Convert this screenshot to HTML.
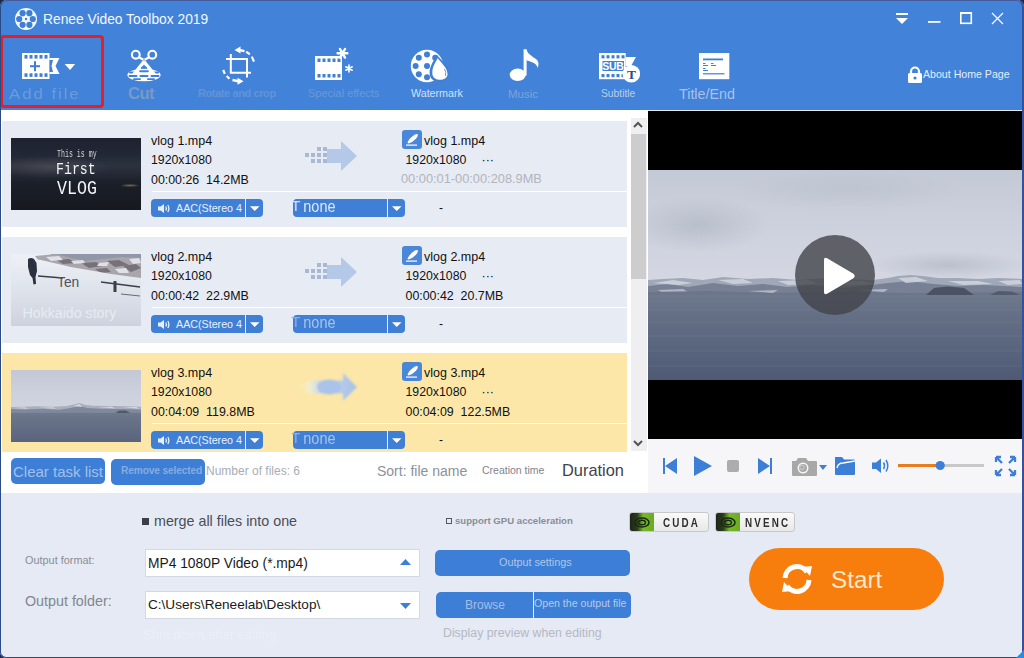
<!DOCTYPE html>
<html><head><meta charset="utf-8">
<style>
*{margin:0;padding:0;box-sizing:border-box}
html,body{width:1024px;height:658px;overflow:hidden;background:#1b2a4a}
body{font-family:"Liberation Sans",sans-serif;position:relative}
.a{position:absolute}
#win{left:0;top:0;width:1024px;height:658px;background:#e5eaf5;border-radius:7px 7px 6px 6px;overflow:hidden}
#bord{left:0;top:0;width:1024px;height:658px;border:1px solid #2a4b86;border-top-color:#465c9a;border-right:2px solid #34529a;border-radius:7px 7px 6px 6px}
#hdr{left:0;top:0;width:1024px;height:110px;background:#4283d9}
.lbl{position:absolute;white-space:nowrap;font-family:"Liberation Sans",sans-serif}
#list{left:1px;top:110px;width:647px;height:383px;background:#fff}
.row{position:absolute;left:1px;width:625px;height:106px;background:#e7ebf3;border-left:2px solid #e7ebf3}
.row.y{background:#fce7a8;border-left-color:#fce7a8}
.thumb{position:absolute;left:7px;top:17px;width:130px;height:72px;overflow:hidden}
.t1{position:absolute;white-space:nowrap;font-size:12px;color:#111}
.sep{position:absolute;left:148px;top:70px;width:475px;height:1px;background:#fff}
.aac{position:absolute;left:147px;top:78px;width:112px;height:17.6px;background:#3f7fd6;border-radius:4px}
.none{position:absolute;left:288.8px;top:78px;width:112.2px;height:17.6px;background:#3f7fd6;border-radius:4px}
.btn{position:absolute;background:#3d7fd6;border-radius:4px}
</style></head><body>
<div id="win" class="a"><div id="hdr" class="a"></div>
<div class="a" style="left:0;top:0;width:1024px;height:110px;">
  <!-- logo -->
  <svg class="a" style="left:14px;top:7px" width="24" height="24" viewBox="0 0 24 24">
    <circle cx="12" cy="12" r="11" fill="#f4f9ff"/>
    <g fill="#3f7fd6">
      <circle cx="8.6" cy="6.2" r="3.1"/><circle cx="15.4" cy="6.2" r="3.1"/>
      <circle cx="5.2" cy="12" r="3.1"/><circle cx="18.8" cy="12" r="3.1"/>
      <circle cx="8.6" cy="17.8" r="3.1"/><circle cx="15.4" cy="17.8" r="3.1"/>
      <circle cx="12" cy="12" r="1.2"/>
    </g>
  </svg>
  <div class="lbl" style="left:43px;top:12px;font-size:13.8px;color:#f2f7ff;line-height:16px">Renee Video Toolbox 2019</div>
  <!-- window controls -->
  <svg class="a" style="left:890px;top:6px" width="125" height="24" viewBox="0 0 125 24">
    <rect x="6" y="7" width="12" height="2" fill="#fff"/>
    <path d="M6 12 L18 12 L12 18 Z" fill="#fff"/>
    <rect x="38" y="15" width="12.5" height="1.8" fill="#fff"/>
    <rect x="70.8" y="6.8" width="10.5" height="10.5" fill="none" stroke="#fff" stroke-width="1.6"/>
    <rect x="70" y="6" width="12" height="2" fill="#fff"/>
    <path d="M102 7 L113 18 M113 7 L102 18" stroke="#fff" stroke-width="1.2"/>
  </svg>
  <!-- red box -->
  <div class="a" style="left:0;top:35px;width:104px;height:73px;border:3px solid #ea1c24;border-radius:4px"></div>
  <!-- Add file icon -->
  <svg class="a" style="left:20px;top:50px" width="60" height="32" viewBox="0 0 60 32">
    <rect x="2" y="3" width="27.5" height="26" fill="#fff"/>
    <g fill="#3f7fd6">
      <rect x="4.5" y="5" width="3" height="3.6"/><rect x="9.5" y="5" width="3" height="3.6"/><rect x="14.5" y="5" width="3" height="3.6"/><rect x="19.5" y="5" width="3" height="3.6"/><rect x="24.5" y="5" width="3" height="3.6"/>
      <rect x="4.5" y="23.3" width="3" height="3.6"/><rect x="9.5" y="23.3" width="3" height="3.6"/><rect x="14.5" y="23.3" width="3" height="3.6"/><rect x="19.5" y="23.3" width="3" height="3.6"/><rect x="24.5" y="23.3" width="3" height="3.6"/>
      <rect x="10" y="15.2" width="10" height="2"/><rect x="14" y="11.2" width="2" height="10"/>
    </g>
    <path d="M29.5 8 L39.5 8 L35.5 16 L39.5 24 L29.5 24 Z" fill="#fff"/>
    <path d="M29.5 10 L33 10 L31.5 16 L33 22 L29.5 22 Z" fill="#3f7fd6"/>
    <path d="M44.7 14 L55.2 14 L50 20 Z" fill="#fff"/>
  </svg>
  <div class="lbl" style="left:9px;top:86px;font-size:14px;color:#6d9bd9;line-height:16px;letter-spacing:1.5px;transform:scaleX(1.22);transform-origin:0 0">Add file</div>
  <!-- Cut icon -->
  <svg class="a" style="left:124px;top:46px" width="40" height="38" viewBox="0 0 40 38">
    <circle cx="11.8" cy="8.7" r="3.9" fill="none" stroke="#fff" stroke-width="2.1"/>
    <circle cx="28.3" cy="8.7" r="3.9" fill="none" stroke="#fff" stroke-width="2.1"/>
    <path d="M14.8 11.3 L20 14 L25.2 11.3" stroke="#fff" stroke-width="2.2" fill="none"/>
    <ellipse cx="20" cy="29" rx="16.6" ry="6.3" fill="#fff"/>
    <g fill="#3f7fd6">
      <rect x="5" y="25.6" width="7.5" height="2" rx="1"/><rect x="27.5" y="25.6" width="7.5" height="2" rx="1"/>
      <rect x="4.5" y="29" width="9" height="2" rx="1"/><rect x="15.5" y="29" width="9" height="2" rx="1"/><rect x="26.5" y="29" width="9" height="2" rx="1"/>
      <rect x="9" y="32.2" width="8" height="1.8" rx=".9"/><rect x="23" y="32.2" width="8" height="1.8" rx=".9"/>
    </g>
    <path d="M20 13 L8 28 L12.5 28.5 L20 18.5 L27.5 28.5 L32 28 Z" fill="#fff"/>
    <g fill="#3f7fd6"><rect x="17.2" y="20.5" width="5.6" height="1.8" rx=".9"/><rect x="15.2" y="24.3" width="9.6" height="2" rx="1"/></g>
    <circle cx="20" cy="14" r="1" fill="#d8403a" opacity=".55"/>
  </svg>
  <div class="lbl" style="left:128px;top:84px;font-size:16.5px;color:#789ac6;line-height:18px;font-weight:bold;letter-spacing:-0.5px">Cut</div>
  <!-- Rotate and crop -->
  <svg class="a" style="left:220px;top:44px" width="40" height="42" viewBox="0 0 40 42">
    <path d="M10.8 10 L10.8 28.8 L31 28.8 M6 15 L27 15 L27 33.5" fill="none" stroke="#fff" stroke-width="2"/>
    <g stroke="#fff" stroke-width="2.2" fill="none">
      <path d="M26.2 7.6 L29.8 10.4"/><path d="M31.8 12.6 L34 17.6"/>
      <path d="M3.2 25.8 L4.8 29.8"/><path d="M6.6 32 L9.5 34.8"/>
    </g>
    <path d="M14.5 6 L20.5 2.5 L20.5 9.5 Z" fill="#fff"/><path d="M19 6 L24.5 7.2" stroke="#fff" stroke-width="2.4"/>
    <path d="M23.5 37.2 L17.5 33.7 L17.5 40.7 Z" fill="#fff"/><path d="M12.5 36 L18.5 37.2" stroke="#fff" stroke-width="2.4"/>
  </svg>
  <div class="lbl" style="left:198px;top:87px;font-size:11px;color:#6393d6;line-height:13px;font-weight:bold;letter-spacing:-0.4px">Rotate and crop</div>
  <!-- Special effects -->
  <svg class="a" style="left:312px;top:46px" width="44" height="36" viewBox="0 0 44 36">
    <rect x="3" y="10" width="27" height="24" fill="#fff"/>
    <g fill="#3f7fd6">
      <rect x="5.5" y="12.5" width="3" height="3.5"/><rect x="10.5" y="12.5" width="3" height="3.5"/><rect x="15.5" y="12.5" width="3" height="3.5"/><rect x="20.5" y="12.5" width="3" height="3.5"/><rect x="25.5" y="12.5" width="3" height="3.5"/>
      <rect x="5.5" y="28" width="3" height="3.5"/><rect x="10.5" y="28" width="3" height="3.5"/><rect x="15.5" y="28" width="3" height="3.5"/><rect x="20.5" y="28" width="3" height="3.5"/><rect x="25.5" y="28" width="3" height="3.5"/>
    </g>
    <g stroke="#fff" stroke-width="2" stroke-linecap="round">
      <path d="M25.6 7.3 L35.4 7.3 M28 3 L33 11.6 M33 3 L28 11.6" stroke-width="2.4"/>
      <path d="M37 19 L37 26 M33.8 20.8 L40.2 24.2 M40.2 20.8 L33.8 24.2" stroke-width="1.6"/>
    </g>
  </svg>
  <div class="lbl" style="left:308px;top:87px;font-size:11px;color:#6a98d8;line-height:13px">Special effects</div>
  <!-- Watermark -->
  <svg class="a" style="left:408px;top:47px" width="46" height="38" viewBox="0 0 46 38">
    <circle cx="19" cy="19" r="16.2" fill="#fff"/>
    <g fill="#3f7fd6">
      <circle cx="19" cy="7.6" r="3"/><circle cx="10.8" cy="10.8" r="3"/><circle cx="27.2" cy="10.8" r="3"/>
      <circle cx="7.6" cy="19" r="3"/><circle cx="19" cy="19" r="3"/>
      <circle cx="10.8" cy="27.2" r="3"/><circle cx="19" cy="30.2" r="3"/>
    </g>
    <path d="M29 8 C 25 15, 20 21, 22 29 C 24 37, 41 37, 41.5 28 C 42 20, 34 14, 29 8 Z" fill="#3f7fd6"/>
    <path d="M29.8 11 C 27 16, 23.5 21, 24.5 28 C 26 34.5, 39 34.5, 39.5 27.5 C 40 21, 33 16, 29.8 11 Z" fill="#fff"/>
    <path d="M36.5 22 Q38.5 25 37.5 29" stroke="#3f7fd6" stroke-width="0.8" fill="none"/>
  </svg>
  <div class="lbl" style="left:411px;top:87px;font-size:10.7px;color:#d4e0f4;line-height:13px">Watermark</div>
  <!-- Music -->
  <svg class="a" style="left:505px;top:46px" width="40" height="38" viewBox="0 0 40 38">
    <ellipse cx="12.7" cy="28.8" rx="8" ry="6.2" fill="#fff"/>
    <rect x="18.6" y="3.5" width="3" height="26" fill="#fff"/>
    <path d="M18.6 3.5 L21.6 3.5 C 22.5 8, 27 10, 31 13 C 34 15.5, 34 19, 32.5 22 C 32 18, 28 16, 21.6 14.5 Z" fill="#fff"/>
  </svg>
  <div class="lbl" style="left:508px;top:87px;font-size:11.5px;color:#7ea2d9;line-height:14px">Music</div>
  <!-- Subtitle -->
  <svg class="a" style="left:596px;top:48px" width="44" height="38" viewBox="0 0 44 38">
    <rect x="3" y="5" width="26.7" height="26.2" fill="#fff"/>
    <g fill="#3f7fd6">
      <rect x="5.5" y="7.2" width="3" height="3.2"/><rect x="10.5" y="7.2" width="3" height="3.2"/><rect x="15.5" y="7.2" width="3" height="3.2"/><rect x="20.5" y="7.2" width="3" height="3.2"/><rect x="25.5" y="7.2" width="3" height="3.2"/>
      <rect x="5.5" y="26" width="3" height="3.2"/><rect x="10.5" y="26" width="3" height="3.2"/><rect x="15.5" y="26" width="3" height="3.2"/><rect x="20.5" y="26" width="3" height="3.2"/><rect x="25.5" y="26" width="3" height="3.2"/>
      <rect x="6.5" y="13" width="21.5" height="10"/>
    </g>
    <text x="17" y="22" font-family="Liberation Sans" font-size="10.5" font-weight="bold" fill="#fff" text-anchor="middle" letter-spacing="-0.3">SUB</text>
    <path d="M29.7 9 L40 9 L35 18 L29.7 18 Z" fill="#fff"/>
    <circle cx="35.3" cy="25.8" r="8.8" fill="#fff"/>
    <circle cx="35.5" cy="25.6" r="7" fill="#fff" stroke="#3f7fd6" stroke-width="0"/>
    <text x="35.5" y="30.5" font-family="Liberation Serif" font-size="13.5" font-weight="bold" fill="#2a4a8c" text-anchor="middle">T</text>
  </svg>
  <div class="lbl" style="left:601px;top:87px;font-size:10.3px;color:#bccdea;line-height:13px">Subtitle</div>
  <!-- Title/End -->
  <svg class="a" style="left:698px;top:52px" width="32" height="28" viewBox="0 0 32 28">
    <rect x="1" y="1" width="30.3" height="26.2" fill="#fff"/>
    <g fill="#3f7fd6">
      <rect x="5" y="6.5" width="20" height="1.8"/>
      <rect x="5" y="11" width="2.5" height="1"/><rect x="13" y="11" width="2.5" height="1"/>
      <rect x="5" y="13" width="5" height="1"/><rect x="13" y="13" width="5" height="1"/>
      <rect x="5" y="16" width="2.5" height="1"/><rect x="5" y="18" width="5" height="1"/>
      <rect x="5" y="21.2" width="21.5" height="1.2"/>
    </g>
  </svg>
  <div class="lbl" style="left:679px;top:86px;font-size:14.3px;color:#a9c1e9;line-height:17px">Title/End</div>
  <!-- About -->
  <svg class="a" style="left:907px;top:66px" width="16" height="18" viewBox="0 0 16 18">
    <path d="M4 8 L4 5.5 A4 4 0 0 1 12 5.5 L12 8" fill="none" stroke="#fff" stroke-width="2.2"/>
    <rect x="1" y="7" width="14" height="10" rx="1.5" fill="#fff"/>
    <circle cx="8" cy="12" r="1.6" fill="#3f7fd6"/>
  </svg>
  <div class="lbl" style="left:923px;top:68px;font-size:10.6px;color:#e4edf9;line-height:12px">About Home Page</div>
</div>

<div id="list" class="a"><div class="a" style="left:0;top:0;width:647px;height:342px;overflow:hidden"><div class="row" style="top:11px"><div class="thumb" style="background:linear-gradient(180deg,#1d2130 0%,#232837 25%,#2d323f 38%,#262b37 48%,#1b1f29 62%,#16191f 100%)">
   <div class="a" style="left:-20px;top:18px;width:120px;height:22px;border-radius:50%;background:radial-gradient(ellipse at center,rgba(90,88,95,.55) 0%,rgba(60,62,72,0) 70%)"></div>
   <div class="a" style="left:110px;top:46px;width:18px;height:3px;border-radius:2px;background:radial-gradient(ellipse at center,rgba(190,150,110,.6) 0%,rgba(120,100,80,0) 80%)"></div>
   <div class="lbl" style="left:46px;top:10px;font-family:'Liberation Mono',monospace;font-size:11px;color:#d0d4dc;line-height:12px;transform:scaleX(0.6);transform-origin:0 0">This is my</div>
   <div class="lbl" style="left:44.5px;top:23px;font-family:'Liberation Mono',monospace;font-size:17px;color:#f2f4f8;line-height:18px;transform:scaleX(0.78);transform-origin:0 0">First</div>
   <div class="lbl" style="left:45.5px;top:40px;font-family:'Liberation Mono',monospace;font-size:20px;color:#f2f4f8;line-height:21px;transform:scaleX(0.83);transform-origin:0 0">VLOG</div>
 </div><div class="t1" style="left:147px;top:12px;line-height:16px;font-size:12.5px">vlog 1.mp4</div><div class="t1" style="left:147px;top:31px;line-height:16px;font-size:12.3px">1920x1080</div><div class="t1" style="left:147px;top:51px;line-height:16px;font-size:12.4px">00:00:26&nbsp; 14.2MB</div><svg class="a" style="left:293px;top:18px" width="62" height="34" viewBox="0 0 62 34">
  <path d="M33 10 L47 10 L47 2 L63 17 L47 32 L47 24 L33 24 Z" fill="#b4c9e8" transform="translate(-3,0)"/>
  <g fill="#a9b8d3"><rect x="8" y="14" width="4" height="4"/><rect x="14" y="14" width="4" height="4"/><rect x="20" y="8" width="4" height="4"/><rect x="26" y="8" width="4" height="4"/><rect x="20" y="14" width="4" height="4"/><rect x="26" y="14" width="4" height="4"/><rect x="14" y="20" width="4" height="4"/><rect x="20" y="20" width="4" height="4"/><rect x="26" y="20" width="4" height="4"/></g>
</svg><svg class="a" style="left:398px;top:9px" width="20" height="19" viewBox="0 0 20 19">
  <rect x="0" y="0" width="20" height="19" rx="3" fill="#4a87d9"/>
  <path d="M5.5 12.8 Q7 8.5 12.5 4.8 Q15 3.5 15.8 4.6 Q16.3 6 14 8.8 Q10.5 12.5 6.5 13.6 Z" fill="#fff"/>
  <rect x="4" y="14.5" width="11" height="1.2" fill="#fff"/>
</svg><div class="t1" style="left:420px;top:12px;line-height:16px;font-size:12.5px">vlog 1.mp4</div><div class="t1" style="left:401.5px;top:31px;line-height:16px;font-size:12.3px">1920x1080</div><div class="t1" style="left:477.5px;top:30.5px;line-height:16px;font-size:12.5px">···</div><div class="t1" style="left:397px;top:50px;line-height:16px;font-size:12.8px;color:#b1b5bd">00:00:01-00:00:208.9MB</div><div class="sep"></div><div class="aac"><svg class="a" style="left:7px;top:5px" width="13" height="9" viewBox="0 0 13 9"><path d="M0 2.6 L2.6 2.6 L6 0 L6 9 L2.6 6.4 L0 6.4 Z" fill="#e8f0fb"/><path d="M7.8 2.5 Q9 4.5 7.8 6.5 M9.8 1 Q12 4.5 9.8 8" stroke="#e8f0fb" stroke-width="1.3" fill="none"/></svg>
    <div class="lbl" style="left:25px;top:3px;font-size:10.7px;color:#eaf1fb;line-height:12px">AAC(Stereo 4</div>
    <div class="a" style="left:93.5px;top:0;width:1px;height:18px;background:#e8effa"></div>
    <svg class="a" style="left:98.5px;top:6.5px" width="10" height="6" viewBox="0 0 10 6"><path d="M0 0.2 L9.5 0.2 L4.75 5 Z" fill="#fff"/></svg></div><div class="none"><div class="lbl" style="left:-1.5px;top:-1px;font-size:14.5px;color:#dae4f5;line-height:17px">T</div><div class="lbl" style="left:10.5px;top:0px;font-size:14.5px;color:#dde7f6;line-height:17px;transform:scaleY(1.08)">none</div>
    <div class="a" style="left:93.8px;top:0;width:1px;height:18px;background:#e8effa"></div>
    <svg class="a" style="left:99px;top:6.5px" width="10" height="6" viewBox="0 0 10 6"><path d="M0 0.2 L9.5 0.2 L4.75 5 Z" fill="#fff"/></svg></div><div class="t1" style="left:435px;top:79px;line-height:16px">-</div></div>
<div class="row" style="top:127px"><div class="thumb"><svg width="130" height="72" viewBox="0 0 130 72">
   <defs><linearGradient id="sn" x1="0" y1="0" x2="0" y2="1"><stop offset="0" stop-color="#edf0f5"/><stop offset=".4" stop-color="#e1e5ed"/><stop offset="1" stop-color="#cdd2de"/></linearGradient></defs>
   <rect width="130" height="72" fill="url(#sn)"/>
   <path d="M40 0 L130 0 L130 10 L40 10 Z" fill="#9097a7"/>
   <path d="M24 2 L45 0 L60 4 L75 7 L92 5 L110 3 L130 4 L130 26 L100 21 L60 14 L28 7 Z" fill="#a9a6ab"/>
   <path d="M45 6 L58 5 L66 9 L52 10 Z M70 9 L85 8 L92 12 L78 14 Z M96 7 L108 6 L118 11 L104 13 Z M112 12 L125 10 L130 14 L120 18 Z M84 15 L96 14 L100 18 L90 19 Z" fill="#77727a"/>
   <path d="M35 3 L48 2 L52 6 L40 7 Z M60 7 L72 6 L74 9 L63 10 Z M88 9 L98 8 L96 12 L86 12 Z M118 5 L128 4 L130 9 L122 10 Z M104 15 L115 14 L118 19 L108 19 Z" fill="#dfe1e7"/>
   <path d="M0 2 L30 6 L60 13 L100 20 L130 24 L130 72 L0 72 Z" fill="url(#sn)"/>
   <path d="M17 5 Q20 3 23 5 L25.5 9 L26 17 L24.5 23 L25 30 L22.5 30.5 L21.5 24 L19 21 L17 13 Z" fill="#2b3140"/>
   <path d="M27 22 L52 24" stroke="#3a3f4a" stroke-width="1.6"/>
   <path d="M90 28 L129 33" stroke="#3a3f4a" stroke-width="1.6"/>
   <rect x="102.5" y="27" width="3" height="11" fill="#3a3f4a"/>
   <path d="M110 40 L129 42" stroke="#4a4f5a" stroke-width="1.2" opacity=".8"/>
   <text x="46" y="33" font-family="Liberation Sans" font-size="13.8" fill="#4d525b">Ten</text>
   <text x="11.5" y="63.7" font-family="Liberation Sans" font-size="14.2" fill="#e8ebf3">Hokkaido story</text>
 </svg></div><div class="t1" style="left:147px;top:12px;line-height:16px;font-size:12.5px">vlog 2.mp4</div><div class="t1" style="left:147px;top:31px;line-height:16px;font-size:12.3px">1920x1080</div><div class="t1" style="left:147px;top:51px;line-height:16px;font-size:12.4px">00:00:42&nbsp; 22.9MB</div><svg class="a" style="left:293px;top:18px" width="62" height="34" viewBox="0 0 62 34">
  <path d="M33 10 L47 10 L47 2 L63 17 L47 32 L47 24 L33 24 Z" fill="#b4c9e8" transform="translate(-3,0)"/>
  <g fill="#a9b8d3"><rect x="8" y="14" width="4" height="4"/><rect x="14" y="14" width="4" height="4"/><rect x="20" y="8" width="4" height="4"/><rect x="26" y="8" width="4" height="4"/><rect x="20" y="14" width="4" height="4"/><rect x="26" y="14" width="4" height="4"/><rect x="14" y="20" width="4" height="4"/><rect x="20" y="20" width="4" height="4"/><rect x="26" y="20" width="4" height="4"/></g>
</svg><svg class="a" style="left:398px;top:9px" width="20" height="19" viewBox="0 0 20 19">
  <rect x="0" y="0" width="20" height="19" rx="3" fill="#4a87d9"/>
  <path d="M5.5 12.8 Q7 8.5 12.5 4.8 Q15 3.5 15.8 4.6 Q16.3 6 14 8.8 Q10.5 12.5 6.5 13.6 Z" fill="#fff"/>
  <rect x="4" y="14.5" width="11" height="1.2" fill="#fff"/>
</svg><div class="t1" style="left:420px;top:12px;line-height:16px;font-size:12.5px">vlog 2.mp4</div><div class="t1" style="left:401.5px;top:31px;line-height:16px;font-size:12.3px">1920x1080</div><div class="t1" style="left:477.5px;top:30.5px;line-height:16px;font-size:12.5px">···</div><div class="t1" style="left:401.5px;top:51px;line-height:16px;font-size:12.4px">00:00:42&nbsp; 20.7MB</div><div class="sep"></div><div class="aac"><svg class="a" style="left:7px;top:5px" width="13" height="9" viewBox="0 0 13 9"><path d="M0 2.6 L2.6 2.6 L6 0 L6 9 L2.6 6.4 L0 6.4 Z" fill="#e8f0fb"/><path d="M7.8 2.5 Q9 4.5 7.8 6.5 M9.8 1 Q12 4.5 9.8 8" stroke="#e8f0fb" stroke-width="1.3" fill="none"/></svg>
    <div class="lbl" style="left:25px;top:3px;font-size:10.7px;color:#eaf1fb;line-height:12px">AAC(Stereo 4</div>
    <div class="a" style="left:93.5px;top:0;width:1px;height:18px;background:#e8effa"></div>
    <svg class="a" style="left:98.5px;top:6.5px" width="10" height="6" viewBox="0 0 10 6"><path d="M0 0.2 L9.5 0.2 L4.75 5 Z" fill="#fff"/></svg></div><div class="none"><div class="lbl" style="left:-1.5px;top:-1px;font-size:14.5px;color:#8db0e2;line-height:17px">T</div><div class="lbl" style="left:10.5px;top:0px;font-size:14.5px;color:#a9c2e8;line-height:17px;transform:scaleY(1.08)">none</div>
    <div class="a" style="left:93.8px;top:0;width:1px;height:18px;background:#e8effa"></div>
    <svg class="a" style="left:99px;top:6.5px" width="10" height="6" viewBox="0 0 10 6"><path d="M0 0.2 L9.5 0.2 L4.75 5 Z" fill="#fff"/></svg></div><div class="t1" style="left:435px;top:79px;line-height:16px">-</div></div>
<div class="row y" style="top:243px"><div class="thumb"><svg width="130" height="72" viewBox="0 0 374 210" preserveAspectRatio="none">
    <defs>
      <linearGradient id="tsky" x1="0" y1="0" x2="0" y2="1"><stop offset="0" stop-color="#c3c8d4"/><stop offset=".5" stop-color="#ccd0dc"/><stop offset="1" stop-color="#d3d6e0"/></linearGradient>
      <linearGradient id="twat" x1="0" y1="0" x2="0" y2="1"><stop offset="0" stop-color="#6f798d"/><stop offset=".3" stop-color="#667086"/><stop offset="1" stop-color="#5a647e"/></linearGradient>
    </defs>
    <rect width="374" height="126" fill="url(#tsky)"/>
    <path d="M0 126 L0 108 L35 107 L75 106 L120 107 L160 105 L185 100 L197 96 L212 101 L235 104 L290 105 L330 106 L374 107 L374 126 Z" fill="#a9afbd"/>
    <path d="M0 126 L0 114 L40 115 L90 113 L140 116 L175 110 L197 104 L220 111 L260 113 L310 114 L374 115 L374 126 Z" fill="#7f889c"/>
    <path d="M5 111 L40 109 L50 113 Z M80 110 L120 109 L130 113 Z M180 106 L197 99 L205 108 Z M250 108 L290 107 L300 112 Z M320 109 L360 108 L370 113 Z" fill="#dadde5" opacity=".85"/>
    <path d="M300 126 L310 119 L330 118 L345 126 Z" fill="#4f586a"/>
    <rect y="125" width="374" height="85" fill="url(#twat)"/>
 </svg></div><div class="t1" style="left:147px;top:12px;line-height:16px;font-size:12.5px">vlog 3.mp4</div><div class="t1" style="left:147px;top:31px;line-height:16px;font-size:12.3px">1920x1080</div><div class="t1" style="left:147px;top:51px;line-height:16px;font-size:12.4px">00:04:09&nbsp; 119.8MB</div><svg class="a" style="left:289px;top:15px" width="66" height="38" viewBox="0 0 66 38">
  <defs><linearGradient id="ag" x1="0" x2="1"><stop offset="0" stop-color="#fce7a8" stop-opacity="0"/><stop offset=".2" stop-color="#f3eed0"/><stop offset=".4" stop-color="#c7d6ec"/><stop offset="1" stop-color="#a6c1e8"/></linearGradient>
  <filter id="bl" x="-20%" y="-20%" width="140%" height="140%"><feGaussianBlur stdDeviation="1.2"/></filter></defs>
  <g filter="url(#bl)">
  <path d="M4 19 Q10 13 22 12.5 L50 12.5 L50 5 L64 19 L50 33 L50 25.5 L22 25.5 Q10 25 4 19 Z" fill="url(#ag)"/>
  <ellipse cx="36" cy="19" rx="12" ry="7.5" fill="#a9c3e9"/>
  </g>
</svg><svg class="a" style="left:398px;top:9px" width="20" height="19" viewBox="0 0 20 19">
  <rect x="0" y="0" width="20" height="19" rx="3" fill="#4a87d9"/>
  <path d="M5.5 12.8 Q7 8.5 12.5 4.8 Q15 3.5 15.8 4.6 Q16.3 6 14 8.8 Q10.5 12.5 6.5 13.6 Z" fill="#fff"/>
  <rect x="4" y="14.5" width="11" height="1.2" fill="#fff"/>
</svg><div class="t1" style="left:420px;top:12px;line-height:16px;font-size:12.5px">vlog 3.mp4</div><div class="t1" style="left:401.5px;top:31px;line-height:16px;font-size:12.3px">1920x1080</div><div class="t1" style="left:477.5px;top:30.5px;line-height:16px;font-size:12.5px">···</div><div class="t1" style="left:401.5px;top:51px;line-height:16px;font-size:12.4px">00:04:09&nbsp; 122.5MB</div><div class="sep"></div><div class="aac"><svg class="a" style="left:7px;top:5px" width="13" height="9" viewBox="0 0 13 9"><path d="M0 2.6 L2.6 2.6 L6 0 L6 9 L2.6 6.4 L0 6.4 Z" fill="#e8f0fb"/><path d="M7.8 2.5 Q9 4.5 7.8 6.5 M9.8 1 Q12 4.5 9.8 8" stroke="#e8f0fb" stroke-width="1.3" fill="none"/></svg>
    <div class="lbl" style="left:25px;top:3px;font-size:10.7px;color:#eaf1fb;line-height:12px">AAC(Stereo 4</div>
    <div class="a" style="left:93.5px;top:0;width:1px;height:18px;background:#e8effa"></div>
    <svg class="a" style="left:98.5px;top:6.5px" width="10" height="6" viewBox="0 0 10 6"><path d="M0 0.2 L9.5 0.2 L4.75 5 Z" fill="#fff"/></svg></div><div class="none"><div class="lbl" style="left:-1.5px;top:-1px;font-size:14.5px;color:#8db0e2;line-height:17px">T</div><div class="lbl" style="left:10.5px;top:0px;font-size:14.5px;color:#a9c2e8;line-height:17px;transform:scaleY(1.08)">none</div>
    <div class="a" style="left:93.8px;top:0;width:1px;height:18px;background:#e8effa"></div>
    <svg class="a" style="left:99px;top:6.5px" width="10" height="6" viewBox="0 0 10 6"><path d="M0 0.2 L9.5 0.2 L4.75 5 Z" fill="#fff"/></svg></div><div class="t1" style="left:435px;top:79px;line-height:16px">-</div></div></div></div>
<!-- scrollbar -->
<div class="a" style="left:631px;top:118px;width:16px;height:333px;background:#efeff1"></div>
<div class="a" style="left:631px;top:134px;width:15px;height:145px;background:#cdcdcd"></div>
<svg class="a" style="left:633px;top:121px" width="10" height="8" viewBox="0 0 10 8"><path d="M1 6 L5 2 L9 6" stroke="#555" stroke-width="2" fill="none"/></svg>
<svg class="a" style="left:633px;top:439px" width="10" height="8" viewBox="0 0 10 8"><path d="M1 2 L5 6 L9 2" stroke="#555" stroke-width="2" fill="none"/></svg>
<!-- list bottom bar -->
<div class="btn" style="left:11px;top:458px;width:94px;height:26px;border-radius:5px"><div class="lbl" style="left:2px;top:5px;font-size:15px;color:#a3bfe9;line-height:17px">Clear task list</div></div>
<div class="btn" style="left:111px;top:459px;width:94px;height:26px;border-radius:5px"><div class="lbl" style="left:10px;top:6px;font-size:10.2px;font-weight:bold;color:#85abe0;line-height:12px;letter-spacing:-0.15px">Remove selected</div></div>
<div class="lbl" style="left:206px;top:464px;font-size:12px;color:#a9adb5;line-height:14px">Number of files: 6</div>
<div class="lbl" style="left:377px;top:463px;font-size:14px;color:#8d9199;line-height:16px">Sort: file name</div>
<div class="lbl" style="left:482px;top:464px;font-size:10.5px;color:#80848c;line-height:12px">Creation time</div>
<div class="lbl" style="left:562px;top:461px;font-size:16.4px;color:#3f4348;line-height:19px">Duration</div>
<!-- preview -->
<div class="a" style="left:648px;top:111px;width:374px;height:328px;background:#000;overflow:hidden">
  <svg class="a" style="left:0;top:59px" width="374" height="210" viewBox="0 0 374 210">
    <defs>
      <linearGradient id="vsky" x1="0" y1="0" x2="0" y2="1"><stop offset="0" stop-color="#c4c9d6"/><stop offset=".5" stop-color="#cdd1dd"/><stop offset="1" stop-color="#d4d7e2"/></linearGradient>
      <linearGradient id="vwat" x1="0" y1="0" x2="0" y2="1"><stop offset="0" stop-color="#6f798d"/><stop offset=".25" stop-color="#646f85"/><stop offset=".6" stop-color="#5a667e"/><stop offset="1" stop-color="#4e5a74"/></linearGradient>
      <linearGradient id="vmt" x1="0" y1="0" x2="0" y2="1"><stop offset="0" stop-color="#b9bfcc"/><stop offset=".5" stop-color="#8b94a8"/><stop offset="1" stop-color="#6a7389"/></linearGradient>
      <radialGradient id="cl1" cx=".5" cy=".5" r=".5"><stop offset="0" stop-color="#a9afbd" stop-opacity=".55"/><stop offset="1" stop-color="#a9afbd" stop-opacity="0"/></radialGradient>
    </defs>
    <rect width="374" height="110" fill="url(#vsky)"/>
    <ellipse cx="50" cy="55" rx="70" ry="28" fill="url(#cl1)"/>
    <ellipse cx="300" cy="95" rx="80" ry="14" fill="url(#cl1)"/>
    <ellipse cx="200" cy="20" rx="120" ry="20" fill="url(#cl1)" opacity=".5"/>
    <path d="M0 126 L0 110 L15 109 L35 108 L55 110 L75 107 L100 109 L125 108 L150 110 L175 108 L200 109 L225 110 L240 108 L250 106 L262 105 L275 106 L290 108 L310 108 L330 109 L350 108 L374 109 L374 126 Z" fill="#a0a7b6"/>
    <path d="M0 126 L0 116 L20 114 L40 117 L65 113 L90 116 L115 114 L140 117 L165 115 L190 118 L215 116 L240 113 L262 111 L285 114 L310 116 L335 115 L374 117 L374 126 Z" fill="#778095"/>
    <path d="M5 113 L25 110 L45 113 L30 115 Z M70 110 L95 109 L105 113 L85 114 Z M130 111 L160 110 L170 114 L140 115 Z M190 112 L215 111 L225 114 L200 115 Z M250 108 L268 107 L280 111 L258 113 Z M300 111 L330 111 L345 114 L315 115 Z M350 111 L372 110 L374 114 L360 115 Z" fill="#d5d8e1" opacity=".8"/>
    <path d="M10 120 L35 119 L40 122 L15 123 Z M100 121 L130 120 L125 123 Z M210 120 L240 119 L236 122 Z" fill="#c9cdd7" opacity=".7"/>
    <path d="M0 126 L0 122 L60 121 L120 123 L200 122 L260 123 L374 122 L374 126 Z" fill="#6c758a"/>
    <path d="M278 125 L286 118 L300 116.5 L316 118 L326 125 Z" fill="#4a5264"/>
    <path d="M342 125 L350 121 L364 121.5 L372 125 Z" fill="#535c6d"/>
    <rect y="125" width="374" height="85" fill="url(#vwat)"/>
    <g stroke="#7d879b" stroke-width=".7" opacity=".35">
      <path d="M0 140 H374 M0 152 H374 M0 166 H374 M0 181 H374 M0 196 H374"/>
    </g>
  </svg>
  <div class="a" style="left:147px;top:124px;width:80px;height:80px;border-radius:50%;background:rgba(66,68,74,.8)"></div>
  <svg class="a" style="left:172px;top:144px" width="38" height="42" viewBox="0 0 38 42"><path d="M4 5 Q4 1.5 7.5 3.5 L33 18.5 Q36.5 21 33 23.5 L7.5 38.5 Q4 40.5 4 37 Z" fill="#fff"/></svg>
</div>
<!-- controls -->
<div class="a" style="left:648px;top:439px;width:374px;height:54px;background:#f6f6f8"></div>
<svg class="a" style="left:660px;top:455px" width="360" height="24" viewBox="0 0 360 24">
  <rect x="3" y="3" width="2" height="16" fill="#3d7fd6"/><path d="M5 11 L17 3 L17 19 Z" fill="#3d7fd6"/>
  <path d="M34 1 L52 11 L34 21 Z" fill="#3d7fd6"/>
  <rect x="67" y="5" width="12" height="12" rx="2" fill="#acacac"/>
  <path d="M98 3 L110 11 L98 19 Z" fill="#3d7fd6"/><rect x="110" y="3" width="2" height="16" fill="#3d7fd6"/>
  <path d="M132 6 L136 6 L138 3 L146 3 L148 6 L156 6 Q157 6 157 7 L157 20 Q157 21 156 21 L133 21 Q132 21 132 20 Z" fill="#a8a8a8"/>
  <circle cx="143" cy="13" r="5.5" fill="#f6f6f8"/><circle cx="143" cy="13" r="4" fill="#a8a8a8"/><circle cx="142" cy="12.3" r="2.2" fill="none" stroke="#d8d8d8" stroke-width="0.8"/>
  <path d="M159 10 L167 10 L163 15 Z" fill="#3d7fd6"/>
  <path d="M175 2 L182 2 L184 4.5 L194 4.5 Q195 4.5 195 5.5 L195 19 Q195 20 194 20 L176 20 Q175 20 175 19 Z" fill="#3d7fd6"/>
  <path d="M177 13 Q178 8 183 8 L195 6" stroke="#fff" stroke-width="1.3" fill="none"/>
  <path d="M212 7.5 L216 7.5 L221 3.5 L221 18 L216 14 L212 14 Z" fill="#3d7fd6"/>
  <path d="M223.5 7.5 Q225.5 10.7 223.5 14 M226 5 Q229.5 10.7 226 16.5" stroke="#3d7fd6" stroke-width="1.5" fill="none"/>
  <rect x="238" y="9" width="42" height="3" fill="#e87c1e"/>
  <rect x="280" y="9" width="44" height="3" fill="#c8c8c8"/>
  <circle cx="280.2" cy="10.5" r="4.6" fill="#3d7fd6"/>
  <g stroke="#3d7fd6" stroke-width="2.3" fill="none">
    <path d="M336 2 L342 8 M336 2 L336 7 M336 2 L341 2"/>
    <path d="M355 2 L349 8 M355 2 L355 7 M355 2 L350 2"/>
    <path d="M336 20 L342 14 M336 20 L336 15 M336 20 L341 20"/>
    <path d="M355 20 L349 14 M355 20 L355 15 M355 20 L350 20"/>
  </g>
</svg>
<!-- bottom area -->
<div class="a" style="left:142px;top:518px;width:7px;height:7px;background:#3b3f48"></div>
<div class="lbl" style="left:154px;top:513px;font-size:14.3px;color:#4a4e57;line-height:17px">merge all files into one</div>
<div class="a" style="left:446px;top:518px;width:6px;height:6px;border:1px solid #55595f"></div>
<div class="lbl" style="left:455px;top:515px;font-size:9.6px;font-weight:bold;color:#8a8e95;line-height:11px">support GPU acceleration</div>
<!-- CUDA -->
<div class="a" style="left:629px;top:512px;width:80px;height:20px;border-radius:3px;background:linear-gradient(180deg,#fafafa,#e8e8e8);border:1px solid #c8c8c8;overflow:hidden">
  <div class="a" style="left:0;top:0;width:24px;height:20px;background:linear-gradient(90deg,#1e2618 0%,#2a3a1e 30%,#76b82a 55%,#6cab24 100%)"></div>
  <svg class="a" style="left:3px;top:3px" width="18" height="13" viewBox="0 0 18 13"><ellipse cx="9" cy="6.5" rx="7" ry="4.5" fill="none" stroke="#1a2a10" stroke-width="1.6"/><ellipse cx="9" cy="6.5" rx="3.5" ry="2.3" fill="none" stroke="#1a2a10" stroke-width="1.4"/></svg>
  <div class="lbl" style="left:33px;top:2px;font-size:13.7px;font-weight:bold;color:#2e2e2e;line-height:16px;letter-spacing:3px;transform:scaleX(0.72);transform-origin:0 0">CUDA</div>
</div>
<div class="a" style="left:715px;top:512px;width:80px;height:20px;border-radius:3px;background:linear-gradient(180deg,#fafafa,#e8e8e8);border:1px solid #c8c8c8;overflow:hidden">
  <div class="a" style="left:0;top:0;width:24px;height:20px;background:linear-gradient(90deg,#1e2618 0%,#2a3a1e 30%,#76b82a 55%,#6cab24 100%)"></div>
  <svg class="a" style="left:3px;top:3px" width="18" height="13" viewBox="0 0 18 13"><ellipse cx="9" cy="6.5" rx="7" ry="4.5" fill="none" stroke="#1a2a10" stroke-width="1.6"/><ellipse cx="9" cy="6.5" rx="3.5" ry="2.3" fill="none" stroke="#1a2a10" stroke-width="1.4"/></svg>
  <div class="lbl" style="left:29px;top:2px;font-size:13.7px;font-weight:bold;color:#2e2e2e;line-height:16px;letter-spacing:3px;transform:scaleX(0.72);transform-origin:0 0">NVENC</div>
</div>
<div class="lbl" style="left:25px;top:554px;font-size:10.9px;color:#8a8e96;line-height:12px">Output format:</div>
<div class="lbl" style="left:25px;top:593px;font-size:14.3px;color:#82878f;line-height:16px">Output folder:</div>
<div class="a" style="left:145px;top:549px;width:275px;height:28px;background:#fff;border:1px solid #d4d8e0"></div>
<div class="lbl" style="left:148px;top:556px;font-size:13.8px;color:#1a1a1a;line-height:16px">MP4 1080P Video (*.mp4)</div>
<svg class="a" style="left:399px;top:558px" width="13" height="8" viewBox="0 0 13 8"><path d="M1 7 L6.5 1 L12 7 Z" fill="#3d7fd6"/></svg>
<div class="a" style="left:145px;top:591px;width:275px;height:28px;background:#fff;border:1px solid #d4d8e0"></div>
<div class="lbl" style="left:148px;top:597px;font-size:13.6px;color:#1a1a1a;line-height:16px">C:\Users\Reneelab\Desktop\</div>
<svg class="a" style="left:399px;top:602px" width="13" height="8" viewBox="0 0 13 8"><path d="M1 1 L6.5 7 L12 1 Z" fill="#3d7fd6"/></svg>
<div class="btn" style="left:435px;top:550px;width:195px;height:26px;border-radius:5px"><div class="lbl" style="left:64px;top:6px;font-size:10.8px;color:#b2c6e6;line-height:13px">Output settings</div></div>
<div class="btn" style="left:436px;top:592px;width:195px;height:26px;border-radius:5px">
  <div class="lbl" style="left:29px;top:6px;font-size:12px;color:#a3bde6;line-height:14px">Browse</div>
  <div class="a" style="left:97px;top:0;width:1px;height:26px;background:#e6eefa"></div>
  <div class="lbl" style="left:98px;top:5px;font-size:10.6px;color:#b6c9e8;line-height:13px">Open the output file</div>
</div>
<div class="lbl" style="left:443px;top:626px;font-size:12.3px;color:#b5b9c1;line-height:14px">Display preview when editing</div>
<div class="lbl" style="left:143px;top:627px;font-size:13px;color:#ebeff8;line-height:15px">Shut down after editing</div>
<!-- start -->
<div class="a" style="left:749px;top:548px;width:195px;height:62px;border-radius:31px;background:#f77e0c"></div>
<svg class="a" style="left:779px;top:561px" width="36" height="36" viewBox="0 0 36 36">
  <path d="M6 17 A12 12 0 0 1 28 11" stroke="#fff" stroke-width="5" fill="none"/>
  <path d="M23 6 L33 5 L31 15 Z" fill="#fff"/>
  <path d="M30 19 A12 12 0 0 1 8 25" stroke="#fff" stroke-width="5" fill="none"/>
  <path d="M13 30 L3 31 L5 21 Z" fill="#fff"/>
</svg>
<div class="lbl" style="left:831px;top:566px;font-size:24.3px;color:#fde8cc;line-height:28px">Start</div>
</div><div id="bord" class="a"></div><svg class="a" style="left:1016px;top:650px" width="8" height="8"><path d="M8 0 L8 8 L0 8 Z" fill="#2b8be3"/></svg></body></html>
